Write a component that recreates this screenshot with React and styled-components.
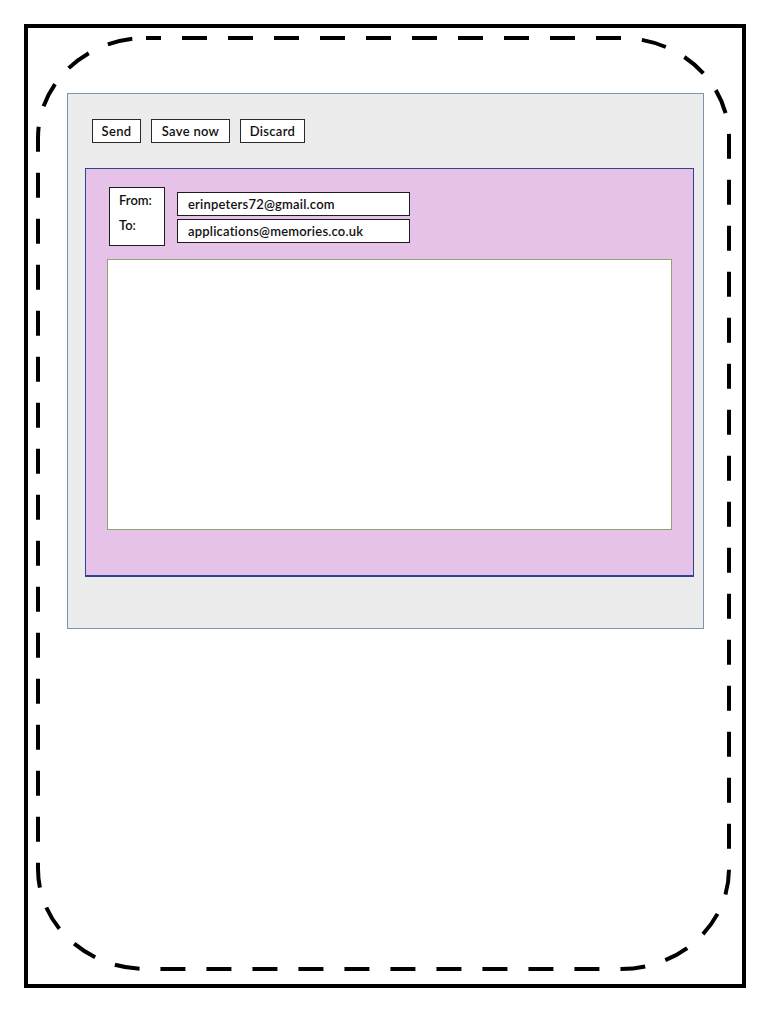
import React from "react";
import styled, { createGlobalStyle } from "styled-components";

const Global = createGlobalStyle`
  * { box-sizing: border-box; }
  html, body { margin: 0; padding: 0; background: #ffffff; }
  body { font-family: Lato, "Open Sans", "Liberation Sans", sans-serif; color: #111; }
`;

const Page = styled.div`
  width: 768px;
  height: 1024px;
  padding: 24px 0 0 24px;
`;

const Frame = styled.div`
  position: relative;
  width: 722px;
  height: 964px;
  border: 4px solid #000;
  padding: 65px 0 0 39px;
`;

const Dashes = styled.svg`
  position: absolute;
  inset: 0;
  width: 100%;
  height: 100%;
  pointer-events: none;
`;

const Window = styled.div`
  position: relative;
  width: 637px;
  height: 536px;
  background: #ececec;
  border: 1px solid #7d92b2;
  padding: 25px 9px 0 17px;
`;

const Toolbar = styled.div`
  display: flex;
  gap: 10px;
  padding-left: 7px;
  margin-bottom: 25px;
`;

const Button = styled.button`
  height: 24px;
  width: ${(p) => p.$w}px;
  padding: 0;
  background: #fff;
  border: 1px solid #2a2a2a;
  border-radius: 0;
  font-family: inherit;
  font-size: 13px;
  font-weight: 600;
  color: #111;
  letter-spacing: 0.3px;
`;

const Compose = styled.div`
  width: 609px;
  height: 409px;
  background: #e6c1e8;
  border: 1px solid #2f4592;
  border-bottom-width: 2px;
  padding: 18px 0 0 21px;
`;

const Header = styled.div`
  display: flex;
  align-items: flex-start;
  gap: 12px;
  margin-left: 2px;
  margin-bottom: 13px;
`;

const Labels = styled.div`
  width: 56px;
  height: 59px;
  background: #fff;
  border: 1px solid #1c1c1c;
  padding: 0 0 0 9px;
  display: flex;
  flex-direction: column;
`;

const Label = styled.span`
  font-size: 13px;
  font-weight: 600;
  line-height: 25px;
`;

const Fields = styled.div`
  display: flex;
  flex-direction: column;
  gap: 3px;
  margin-top: 5px;
`;

const Field = styled.div`
  width: 233px;
  height: 24px;
  background: #fff;
  border: 1px solid #1c1c1c;
  padding-left: 10px;
  display: flex;
  align-items: center;
  font-size: 13px;
  font-weight: 600;
  letter-spacing: 0.2px;
`;

const Body = styled.div`
  width: 565px;
  height: 271px;
  background: #fff;
  border: 1px solid #8ea66c;
`;

export default function App() {
  return (
    <>
      <Global />
      <Page>
        <Frame>
          <Dashes viewBox="0 0 714 956">
            <rect
              x="10"
              y="10"
              width="691"
              height="931"
              rx="108"
              ry="100"
              fill="none"
              stroke="#000"
              strokeWidth="4"
              strokeDasharray="25 21"
              strokeDashoffset="10"
            />
          </Dashes>
          <Window>
            <Toolbar>
              <Button $w={49}>Send</Button>
              <Button $w={79}>Save now</Button>
              <Button $w={65}>Discard</Button>
            </Toolbar>
            <Compose>
              <Header>
                <Labels>
                  <Label>From:</Label>
                  <Label>To:</Label>
                </Labels>
                <Fields>
                  <Field>erinpeters72@gmail.com</Field>
                  <Field>applications@memories.co.uk</Field>
                </Fields>
              </Header>
              <Body />
            </Compose>
          </Window>
        </Frame>
      </Page>
    </>
  );
}
